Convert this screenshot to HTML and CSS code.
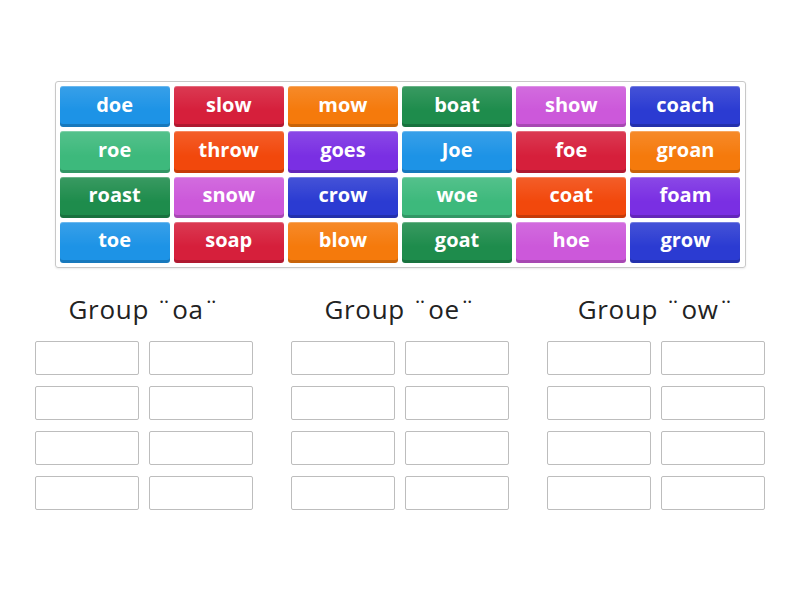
FILE: index.html
```html
<!DOCTYPE html>
<html>
<head>
<meta charset="utf-8">
<link rel="stylesheet" href="styles.css">
</head>
<body>
<div class="page">
  <div class="bank">
    <div class="tile c-blue">doe</div>
    <div class="tile c-red">slow</div>
    <div class="tile c-orange">mow</div>
    <div class="tile c-green">boat</div>
    <div class="tile c-pink">show</div>
    <div class="tile c-indigo">coach</div>
    <div class="tile c-mint">roe</div>
    <div class="tile c-flame">throw</div>
    <div class="tile c-purple">goes</div>
    <div class="tile c-blue">Joe</div>
    <div class="tile c-red">foe</div>
    <div class="tile c-orange">groan</div>
    <div class="tile c-green">roast</div>
    <div class="tile c-pink">snow</div>
    <div class="tile c-indigo">crow</div>
    <div class="tile c-mint">woe</div>
    <div class="tile c-flame">coat</div>
    <div class="tile c-purple">foam</div>
    <div class="tile c-blue">toe</div>
    <div class="tile c-red">soap</div>
    <div class="tile c-orange">blow</div>
    <div class="tile c-green">goat</div>
    <div class="tile c-pink">hoe</div>
    <div class="tile c-indigo">grow</div>
  </div>
  <div class="groups">
    <div class="group">
      <div class="group-title">Group ¨oa¨</div>
      <div class="slots">
        <div class="slot"></div><div class="slot"></div>
        <div class="slot"></div><div class="slot"></div>
        <div class="slot"></div><div class="slot"></div>
        <div class="slot"></div><div class="slot"></div>
      </div>
    </div>
    <div class="group">
      <div class="group-title">Group ¨oe¨</div>
      <div class="slots">
        <div class="slot"></div><div class="slot"></div>
        <div class="slot"></div><div class="slot"></div>
        <div class="slot"></div><div class="slot"></div>
        <div class="slot"></div><div class="slot"></div>
      </div>
    </div>
    <div class="group">
      <div class="group-title">Group ¨ow¨</div>
      <div class="slots">
        <div class="slot"></div><div class="slot"></div>
        <div class="slot"></div><div class="slot"></div>
        <div class="slot"></div><div class="slot"></div>
        <div class="slot"></div><div class="slot"></div>
      </div>
    </div>
  </div>
</div>
</body>
</html>
```

FILE: styles.css
```css
html, body {
  margin: 0;
  padding: 0;
  background: #fff;
}
body {
  font-family: "Open Sans", "DejaVu Sans", sans-serif;
  width: 800px;
  height: 600px;
}
.page {
  display: flex;
  flex-direction: column;
  align-items: center;
  padding-top: 81px;
}
.bank {
  width: 681px;
  padding: 4px;
  border: 1px solid #c8c8c8;
  border-radius: 3px;
  display: grid;
  grid-template-columns: repeat(6, 1fr);
  grid-auto-rows: 41.25px;
  gap: 4px;
  box-shadow: 0 1px 2px rgba(0,0,0,0.08);
}
.tile {
  border-radius: 3px;
  color: #fff;
  font-weight: 700;
  font-size: 20px;
  display: flex;
  align-items: center;
  justify-content: center;
  padding-bottom: 5px;
  box-sizing: border-box;
  box-shadow: inset 0 -3px 0 rgba(0,0,0,0.18), inset 0 1px 0 rgba(255,255,255,0.25);
  background-image: linear-gradient(rgba(255,255,255,0.12), rgba(255,255,255,0) 60%);
}
.c-blue { background-color: #1d93e6; }
.c-red { background-color: #d61f3b; }
.c-orange { background-color: #f57a0c; }
.c-green { background-color: #1e8c4c; }
.c-pink { background-color: #cc58da; }
.c-indigo { background-color: #2b3bd2; }
.c-mint { background-color: #3db97c; }
.c-flame { background-color: #f2480c; }
.c-purple { background-color: #7a2fe3; }

.groups {
  margin-top: 23px;
  display: flex;
  gap: 38px;
}
.group {
  width: 218px;
  display: flex;
  flex-direction: column;
  align-items: center;
}
.group-title {
  font-size: 26px;
  color: #222;
  line-height: 36px;
  letter-spacing: 0.7px;
  margin-bottom: 14px;
}
.slots {
  display: grid;
  grid-template-columns: 104px 104px;
  grid-auto-rows: 34px;
  column-gap: 10px;
  row-gap: 11px;
}
.slot {
  border: 1px solid #bdbdbd;
  border-radius: 2px;
  box-sizing: border-box;
}
```
